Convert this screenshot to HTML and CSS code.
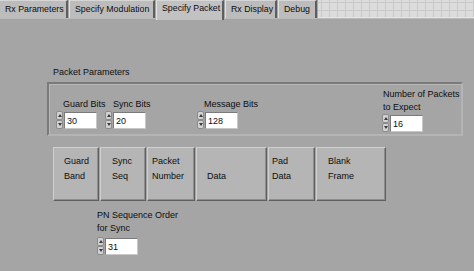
FILE: index.html
```html
<!DOCTYPE html>
<html>
<head>
<meta charset="utf-8">
<link rel="stylesheet" href="styles.css">
</head>
<body>
<div class="tabs">
  <div class="tab w1">Rx Parameters</div>
  <div class="tab w2">Specify Modulation</div>
  <div class="tab w3 active">Specify Packet</div>
  <div class="tab w4">Rx Display</div>
  <div class="tab w5">Debug</div>
  <div class="grid"></div>
</div>
<div class="panel">
  <div class="group-label">Packet Parameters</div>
  <div class="group">
    <div class="ctl c-guard">
      <div class="lbl l-guard">Guard Bits</div>
      <div class="field"><div class="spin"><span class="up"></span><span class="dn"></span></div><div class="num">30</div></div>
    </div>
    <div class="ctl c-sync">
      <div class="lbl l-sync">Sync Bits</div>
      <div class="field"><div class="spin"><span class="up"></span><span class="dn"></span></div><div class="num">20</div></div>
    </div>
    <div class="ctl c-msg">
      <div class="lbl l-msg">Message Bits</div>
      <div class="field"><div class="spin"><span class="up"></span><span class="dn"></span></div><div class="num">128</div></div>
    </div>
    <div class="ctl c-npk">
      <div class="lbl l-npk">Number of Packets<br>to Expect</div>
      <div class="field"><div class="spin"><span class="up"></span><span class="dn"></span></div><div class="num">16</div></div>
    </div>
  </div>
  <div class="buttons">
    <div class="btn b1">Guard<br>Band</div>
    <div class="btn b2">Sync<br>Seq</div>
    <div class="btn b3">Packet<br>Number</div>
    <div class="btn b4">Data</div>
    <div class="btn b5">Pad<br>Data</div>
    <div class="btn b6">Blank<br>Frame</div>
  </div>
  <div class="ctl c-pn">
    <div class="lbl l-pn">PN Sequence Order<br>for Sync</div>
    <div class="field"><div class="spin"><span class="up"></span><span class="dn"></span></div><div class="num">31</div></div>
  </div>
</div>
</body>
</html>
```
FILE: styles.css
```css
html, body {
  margin: 0;
  padding: 0;
  width: 474px;
  height: 271px;
  overflow: hidden;
  background: #a5a5a5;
  font-family: "Liberation Sans", Arial, sans-serif;
  font-size: 9px;
  color: #0d0d0d;
}
.tabs {
  display: flex;
  height: 18px;
  background: #a5a5a5;
}
.tab {
  box-sizing: border-box;
  height: 18px;
  background: #bcbcbc;
  border-left: 1px solid #e2e2e2;
  border-right: 2px solid #5e5e5e;
  border-top: 1px solid #d6d6d6;
  padding: 3px 0 0 5px;
  font-size: 8.8px;
  white-space: nowrap;
  margin-right: 1px;
}
.w1 { width: 68px; border-left: none; }
.w2 { width: 86px; }
.w3 { width: 68px; }
.w4 { width: 52px; }
.w5 { width: 39px; }
.tab.active {
  height: 20px;
  background: #c2c2c2;
  padding-top: 2px;
  position: relative;
  z-index: 1;
}
.grid {
  flex: 1;
  height: 17px;
  background-color: #dcdcdc;
  background-image:
    linear-gradient(to right, #c9c9c9 1px, transparent 1px),
    linear-gradient(to bottom, #c9c9c9 1px, transparent 1px);
  background-size: 8px 8px;
  background-position: 3px 2px;
  border-bottom: 1px solid #e6e6e6;
}
.panel {
  border-top: 1px solid #b9b9b9;
  height: 252px;
  display: flex;
  flex-direction: column;
  align-items: flex-start;
}
.group-label {
  margin: 48px 0 0 53px;
  line-height: 11px;
}
.group {
  box-sizing: border-box;
  margin: 4px 0 0 47px;
  width: 416px;
  height: 54px;
  border: 2px solid #7a7a7a;
  border-right-color: #b4b4b4;
  border-bottom-color: #b4b4b4;
  box-shadow: inset 1px 1px 0 #b8b8b8;
  display: flex;
  align-items: flex-end;
  padding: 0 0 5px 7px;
}
.ctl {
  display: flex;
  flex-direction: column;
  align-items: flex-start;
}
.lbl {
  line-height: 13px;
  white-space: nowrap;
  margin-bottom: 0;
}
.c-guard { width: 49px; margin-bottom: 0; }
.c-sync { width: 92px; margin-bottom: 0; }
.c-msg { width: 185px; margin-bottom: 0; }
.c-npk { margin-bottom: -3px; }
.l-guard { padding-left: 7px; }
.l-sync { padding-left: 8px; }
.l-msg { padding-left: 7px; }
.l-npk { padding-left: 1px; }
.field {
  display: flex;
  align-items: center;
}
.spin {
  width: 7px;
  height: 18px;
  display: flex;
  flex-direction: column;
  margin-right: 1px;
}
.spin span {
  flex: 1;
  background: #d2d2d2;
  border: 1px solid #8a8a8a;
  border-radius: 2px;
  box-sizing: border-box;
  position: relative;
}
.spin .up::after, .spin .dn::after {
  content: "";
  position: absolute;
  left: 1px;
  width: 0;
  height: 0;
  border-left: 2px solid transparent;
  border-right: 2px solid transparent;
}
.spin .up::after { top: 2px; border-bottom: 3px solid #3a3a3a; }
.spin .dn::after { top: 2px; border-top: 3px solid #3a3a3a; }
.num {
  box-sizing: border-box;
  width: 33px;
  height: 17px;
  background: #ffffff;
  border: 1px solid #7a7a7a;
  border-right-color: #c8c8c8;
  border-bottom-color: #c8c8c8;
  padding: 3px 0 0 2px;
  line-height: 11px;
  font-size: 9px;
}
.buttons {
  display: flex;
  margin: 11px 0 0 53px;
  gap: 1px;
}
.btn {
  box-sizing: border-box;
  height: 54px;
  background: #b5b5b5;
  border: 1px solid;
  border-color: #d0d0d0 #606060 #606060 #d0d0d0;
  box-shadow: inset -1px -1px 0 #8e8e8e;
  line-height: 15px;
  padding-top: 6px;
}
.b1 { width: 46px; padding-left: 10px; }
.b2 { width: 46px; padding-left: 11px; }
.b3 { width: 48px; padding-left: 4px; }
.b4 { width: 71px; padding-left: 10px; padding-top: 21px; }
.b5 { width: 47px; padding-left: 3px; }
.b6 { width: 70px; padding-left: 11px; }
.c-pn {
  margin: 8px 0 0 97px;
}
.l-pn { margin-bottom: 2px; }
```
